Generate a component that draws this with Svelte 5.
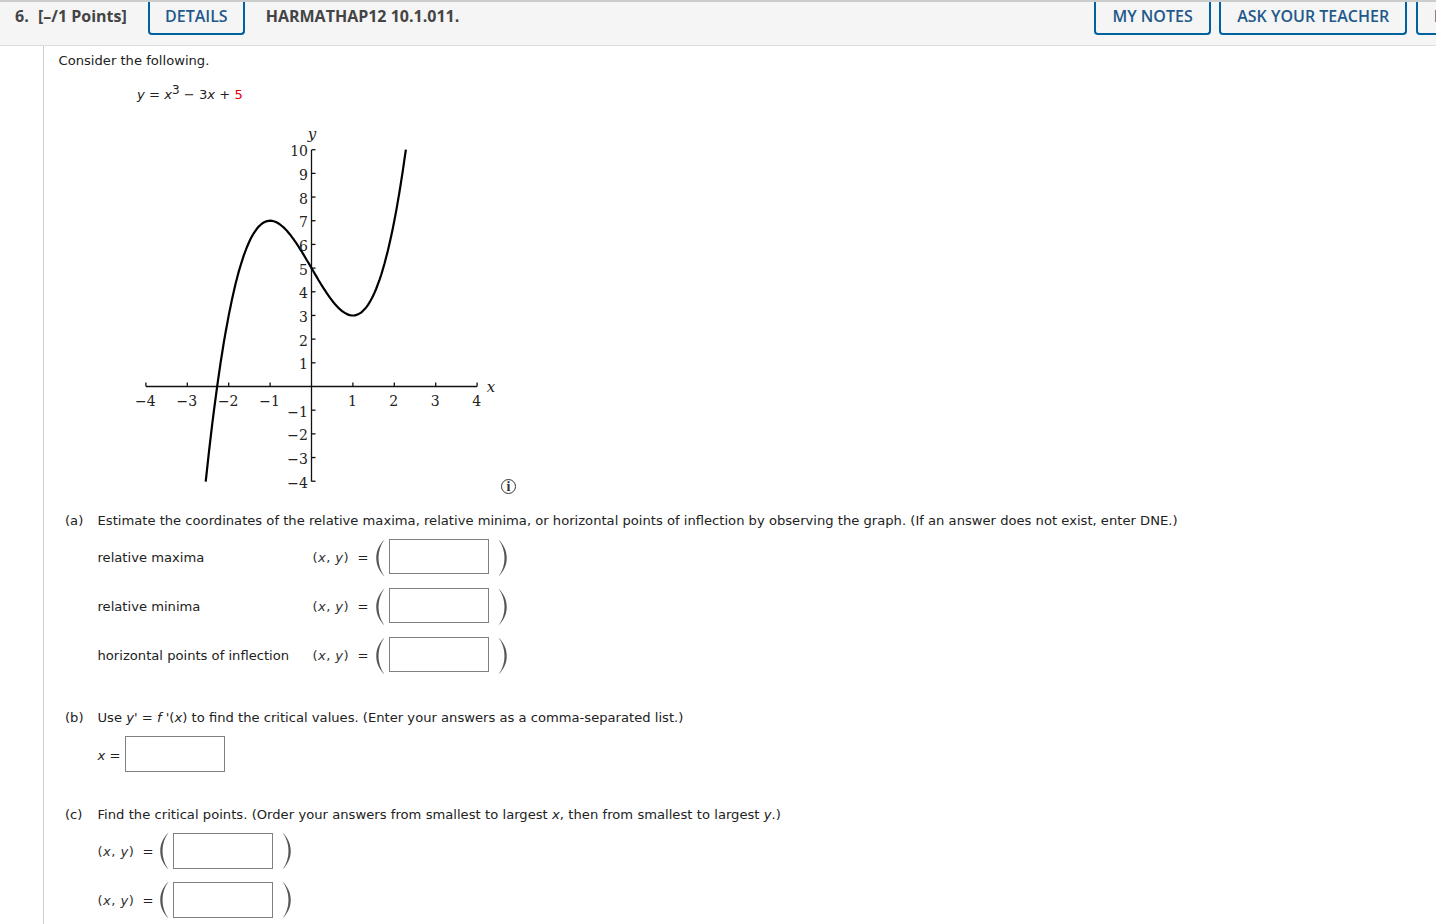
<script>
  // y = x^3 - 3x + 5 sampled into graph pixels
  const px = (x) => 311.5 + x * 41.4
  const py = (y) => 386.5 - y * 23.68
  const f = (x) => x * x * x - 3 * x + 5
  const curve = []
  for (let x = -2.555; x < 2.279; x += 0.04) {
    curve.push(`${px(x).toFixed(1)},${py(f(x)).toFixed(1)}`)
  }
  curve.push(`${px(2.279).toFixed(1)},${py(f(2.279)).toFixed(1)}`)
  const xTicks = [-4, -3, -2, -1, 1, 2, 3, 4]
  const yTicks = [-4, -3, -2, -1, 1, 2, 3, 4, 5, 6, 7, 8, 9, 10]
  const fmt = (n) => (n < 0 ? '\u2212' + Math.abs(n) : String(n))

  const extrema = ['relative maxima', 'relative minima', 'horizontal points of inflection']
</script>

{#snippet answer()}
  <span class="answer">
    <svg class="paren" width="10" height="38" viewBox="0 0 10 38"><path d="M8.5 .5C-2.5 11-2.5 27 8.5 37.5 .5 27 .5 11 8.5 .5Z" /></svg>
    <span class="box"></span>
    <svg class="paren right" width="10" height="38" viewBox="0 0 10 38"><path d="M1.5 .5C12.5 11 12.5 27 1.5 37.5 9.5 27 9.5 11 1.5 .5Z" /></svg>
  </span>
{/snippet}

{#snippet xy()}
  <span class="xy">(<i>x</i>, <i>y</i>)</span><span class="eq">=</span>
{/snippet}

<div class="page">
  <header class="head">
    <span class="num">6.</span>
    <span class="points">[–/1 Points]</span>
    <span class="btn details">DETAILS</span>
    <span class="code">HARMATHAP12 10.1.011.</span>
    <span class="spacer"></span>
    <span class="btn">MY NOTES</span>
    <span class="btn">ASK YOUR TEACHER</span>
    <span class="btn last">PRACTICE ANOTHER</span>
  </header>

  <main class="body">
    <p class="intro">Consider the following.</p>
    <p class="formula"><i>y</i> = <i>x</i><sup>3</sup> − 3<i>x</i> + <span class="red">5</span></p>

    <svg class="graph" width="500" height="380" viewBox="100 120 500 380">
      <g class="axes">
        <path d="M146 386.5H477M311.5 150V481.5" />
        {#each xTicks as t}<path d="M{px(t)} 386.5v-4" />{/each}
        {#each yTicks as t}<path d="M311.5 {py(t)}h4" />{/each}
      </g>
      <polyline class="curve" points={curve.join(' ')} />
      <g class="labels">
        {#each xTicks as t}
          <text x={px(t) - 0.5} y="405.5" text-anchor="middle">{fmt(t)}</text>
        {/each}
        {#each yTicks as t}
          <text x="308" y={py(t) + 6.5} text-anchor="end">{fmt(t)}</text>
        {/each}
        <text class="var" x="312" y="139" text-anchor="middle">y</text>
        <text class="var" x="491" y="392" text-anchor="middle">x</text>
      </g>
      <g class="info">
        <circle cx="508.5" cy="486.5" r="7" />
        <text x="508.5" y="491" text-anchor="middle">i</text>
      </g>
    </svg>

    <section class="part part-a">
      <div class="q"><span class="tag">(a)</span><span>Estimate the coordinates of the relative maxima, relative minima, or horizontal points of inflection by observing the graph. (If an answer does not exist, enter DNE.)</span></div>
      <div class="rows">
        {#each extrema as label}
          <div class="row"><span class="label">{label}</span>{@render xy()}{@render answer()}</div>
        {/each}
      </div>
    </section>

    <section class="part part-b">
      <div class="q"><span class="tag">(b)</span><span>Use <i>y</i>' = <i>f</i> '(<i>x</i>) to find the critical values. (Enter your answers as a comma-separated list.)</span></div>
      <div class="xline"><span class="xlabel"><i>x</i> =</span><span class="box tall"></span></div>
    </section>

    <section class="part part-c">
      <div class="q"><span class="tag">(c)</span><span>Find the critical points. (Order your answers from smallest to largest <i>x</i>, then from smallest to largest <i>y</i>.)</span></div>
      <div class="pts">
        <div class="pt">{@render xy()}{@render answer()}</div>
        <div class="pt">{@render xy()}{@render answer()}</div>
      </div>
    </section>
  </main>
</div>

<style>
  :global(body) {
    margin: 0;
    background: #fff;
    overflow: hidden;
  }

  .page {
    height: 924px;
    overflow: hidden;
    font-family: "DejaVu Sans", Verdana, sans-serif;
    font-size: 13.13px;
    color: #222;
  }

  .head {
    display: flex;
    align-items: flex-start;
    height: 43px;
    background: #f5f5f5;
    border-top: 2px solid #ccc;
    border-bottom: 1px solid #ddd;
    overflow: hidden;
    font-family: "Open Sans", sans-serif;
    font-size: 16px;
    font-weight: 600;
    line-height: 28px;
    color: #444;
    white-space: nowrap;
  }

  .num {
    margin-left: 15px;
    width: 23px;
    font-weight: 700;
  }

  .points {
    width: 110px;
    font-weight: 700;
  }

  .btn {
    flex: none;
    height: 31px;
    padding: 0 16px;
    margin-right: 8.5px;
    border: 2px solid #00619f;
    border-top: 0;
    border-radius: 0 0 4px 4px;
    color: #22598a;
    line-height: 28px;
  }

  .details {
    margin-right: 0;
    padding: 0 15px;
  }

  .last {
    margin-right: -169.5px;
  }

  .code {
    margin-left: 21px;
    font-weight: 700;
  }

  .spacer {
    flex: 1;
  }

  .body {
    margin-left: 43px;
    padding-left: 14.5px;
    border-left: 1px solid #ccc;
    height: 878px;
    box-sizing: border-box;
  }

  p {
    margin: 0;
  }

  .intro {
    padding-top: 7px;
    line-height: 16px;
  }

  .formula {
    margin: 16px 0 0 78.5px;
    line-height: 20px;
  }

  sup {
    font-size: 12px;
    line-height: 0;
  }

  .red {
    color: #e60000;
  }

  .graph {
    display: block;
    margin: 15px 0 0 41.5px;
  }

  .axes path {
    fill: none;
    stroke: #111;
    stroke-width: 1.3;
  }

  .curve {
    fill: none;
    stroke: #000;
    stroke-width: 2.2;
  }

  .labels text {
    font-family: "DejaVu Serif", serif;
    font-size: 14px;
    fill: #222;
  }

  .labels .var {
    font-style: italic;
    font-size: 15px;
  }

  .info circle {
    fill: none;
    stroke: #333;
    stroke-width: 1;
  }

  .info text {
    font-family: "Liberation Serif", serif;
    font-size: 14px;
    font-weight: 700;
    fill: #333;
  }

  .part {
    margin-left: 6.5px;
  }

  .part-a {
    margin-top: 13px;
  }

  .q {
    display: flex;
    line-height: 16px;
    white-space: nowrap;
  }

  .tag {
    width: 32.5px;
    flex: none;
  }

  .rows {
    margin-top: 4px;
  }

  .row {
    display: flex;
    align-items: center;
    height: 49px;
    padding-left: 32.5px;
  }

  .label {
    width: 215px;
    flex: none;
  }

  .xy {
    width: 45px;
    flex: none;
    color: #333;
    letter-spacing: 0.4px;
  }

  .eq {
    width: 18px;
    flex: none;
  }

  .answer {
    display: flex;
    align-items: center;
  }

  .paren {
    display: block;
    margin-right: 3.5px;
  }

  .paren.right {
    margin: 0 0 0 7.5px;
  }

  .paren path {
    fill: #555;
  }

  .box {
    display: block;
    flex: none;
    width: 100px;
    height: 35px;
    margin-bottom: 2px;
    box-sizing: border-box;
    border: 1px solid #808080;
    background: #fff;
  }

  .tall {
    height: 36px;
    margin-bottom: 0;
  }

  .part-b {
    margin-top: 30px;
  }

  .xline {
    display: flex;
    align-items: center;
    margin-top: 9.5px;
    padding-left: 32.5px;
  }

  .xlabel {
    width: 27.5px;
    margin-top: 3px;
  }

  .part-c {
    margin-top: 35px;
    word-spacing: 0.15px;
  }

  .pts {
    margin-top: 4px;
    padding-left: 32.5px;
  }

  .pt {
    display: flex;
    align-items: center;
    height: 49px;
  }

  .pt .eq {
    width: 17px;
  }

  .pt .box {
    height: 36px;
    margin-bottom: 0;
  }
</style>
